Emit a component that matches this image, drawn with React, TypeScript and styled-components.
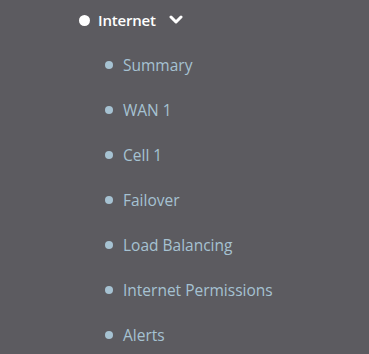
import styled, { createGlobalStyle } from 'styled-components';

const GlobalStyle = createGlobalStyle`
  html, body {
    margin: 0;
    padding: 0;
    background: #5c5b60;
  }
  body {
    font-family: "Open Sans", "Liberation Sans", sans-serif;
  }
`;

const Nav = styled.nav`
  width: 369px;
  height: 354px;
  background: #5c5b60;
  padding: 8px 0 0 79px;
  box-sizing: border-box;
`;

const Header = styled.div`
  display: flex;
  align-items: center;
  height: 24px;
  gap: 8px;
  color: #ffffff;
  font-size: 15px;
  font-weight: 600;
  letter-spacing: -0.2px;
`;

const Dot = styled.span<{ $size: number; $color: string }>`
  width: ${(p) => p.$size}px;
  height: ${(p) => p.$size}px;
  border-radius: 50%;
  background: ${(p) => p.$color};
  flex-shrink: 0;
`;

const Chevron = styled.svg`
  margin-left: 5px;
`;

const List = styled.ul`
  list-style: none;
  margin: 0;
  padding: 20.5px 0 0 26px;
  display: flex;
  flex-direction: column;
  gap: 21px;
`;

const Item = styled.li`
  display: flex;
  align-items: center;
  height: 24px;
  gap: 10px;
  color: #a6c2d2;
  font-size: 15.5px;
`;

const items = [
  'Summary',
  'WAN 1',
  'Cell 1',
  'Failover',
  'Load Balancing',
  'Internet Permissions',
  'Alerts',
];

export default function App() {
  return (
    <>
      <GlobalStyle />
      <Nav>
        <Header>
          <Dot $size={11} $color="#ffffff" />
          Internet
          <Chevron width="14" height="10" viewBox="0 0 14 10">
            <path d="M2 2 L7 7 L12 2" fill="none" stroke="#ffffff" strokeWidth="3" strokeLinecap="round" strokeLinejoin="round" />
          </Chevron>
        </Header>
        <List>
          {items.map((label) => (
            <Item key={label}>
              <Dot $size={8} $color="#a6c2d2" />
              {label}
            </Item>
          ))}
        </List>
      </Nav>
    </>
  );
}
